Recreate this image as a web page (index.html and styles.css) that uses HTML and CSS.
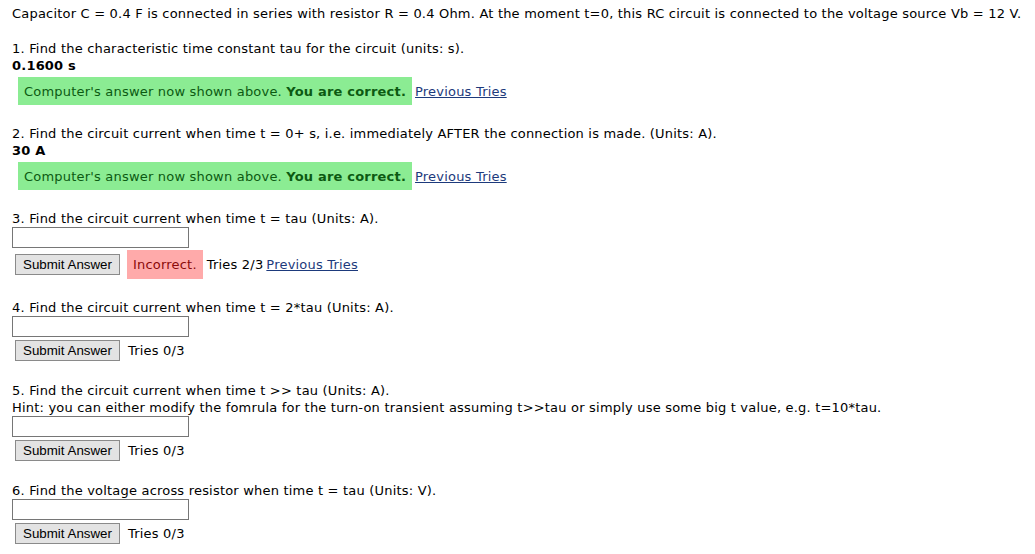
FILE: index.html
```html
<!DOCTYPE html>
<html>
<head>
<meta charset="utf-8">
<link rel="stylesheet" href="styles.css">
</head>
<body>
<div class="page">
  <div class="intro">Capacitor C = 0.4 F is connected in series with resistor R = 0.4 Ohm. At the moment t=0, this RC circuit is connected to the voltage source Vb = 12 V.</div>

  <div class="part">
    <div class="line">1. Find the characteristic time constant tau for the circuit (units: s).</div>
    <div class="line answer">0.1600 s</div>
    <div class="status">
      <span class="correct">Computer's answer now shown above. <b>You are correct.</b></span>
      <a class="tries-link" href="#">Previous Tries</a>
    </div>
  </div>

  <div class="part">
    <div class="line">2. Find the circuit current when time t = 0+ s, i.e. immediately AFTER the connection is made. (Units: A).</div>
    <div class="line answer">30 A</div>
    <div class="status">
      <span class="correct">Computer's answer now shown above. <b>You are correct.</b></span>
      <a class="tries-link" href="#">Previous Tries</a>
    </div>
  </div>

  <div class="part">
    <div class="line">3. Find the circuit current when time t = tau (Units: A).</div>
    <input class="field" type="text">
    <div class="submit-row">
      <button class="submit" type="button">Submit Answer</button>
      <span class="incorrect">Incorrect.</span>
      <span class="tries">Tries 2/3</span>
      <a class="tries-link" href="#">Previous Tries</a>
    </div>
  </div>

  <div class="part">
    <div class="line">4. Find the circuit current when time t = 2*tau (Units: A).</div>
    <input class="field" type="text">
    <div class="submit-row">
      <button class="submit" type="button">Submit Answer</button>
      <span class="tries plain">Tries 0/3</span>
    </div>
  </div>

  <div class="part">
    <div class="line">5. Find the circuit current when time t &gt;&gt; tau (Units: A).</div>
    <div class="line">Hint: you can either modify the fomrula for the turn-on transient assuming t&gt;&gt;tau or simply use some big t value, e.g. t=10*tau.</div>
    <input class="field" type="text">
    <div class="submit-row">
      <button class="submit" type="button">Submit Answer</button>
      <span class="tries plain">Tries 0/3</span>
    </div>
  </div>

  <div class="part">
    <div class="line">6. Find the voltage across resistor when time t = tau (Units: V).</div>
    <input class="field" type="text">
    <div class="submit-row">
      <button class="submit" type="button">Submit Answer</button>
      <span class="tries plain">Tries 0/3</span>
    </div>
  </div>
</div>
</body>
</html>
```

FILE: styles.css
```css
html, body {
  margin: 0;
  padding: 0;
  background: #ffffff;
}

body {
  font-family: "DejaVu Sans", Verdana, sans-serif;
  font-size: 13px;
  line-height: 17px;
  letter-spacing: 0.2px;
  color: #000000;
}

.page {
  padding: 5px 12px 0 12px;
}

.intro {
  margin-bottom: 18px;
  white-space: nowrap;
}

.part {
  margin-bottom: 20px;
}

.line {
  white-space: nowrap;
}

.answer {
  font-weight: bold;
}

.status {
  display: flex;
  align-items: center;
  margin-top: 3px;
  margin-left: 6px;
}

.correct {
  background: #8bec93;
  color: #0c5a12;
  padding: 6px 6px 5px 6px;
  line-height: 17px;
}

.correct b {
  font-weight: bold;
}

.tries-link {
  color: #1d3a7c;
  text-decoration: underline;
  margin-left: 3px;
}

.field {
  display: block;
  box-sizing: border-box;
  width: 177px;
  height: 21px;
  margin: 0;
  padding: 1px 2px;
  border: 1px solid #767676;
  background: #ffffff;
  font-family: "DejaVu Sans", Verdana, sans-serif;
  font-size: 13px;
}

.submit-row {
  display: flex;
  align-items: center;
  margin-top: 2px;
}

.submit {
  box-sizing: border-box;
  height: 21px;
  width: 105px;
  margin: 1px 7px 1px 3px;
  padding: 0 6px;
  border: 1px solid #8a8a8a;
  border-radius: 0;
  background: #e3e3e3;
  color: #000000;
  letter-spacing: 0;
  font-family: "Liberation Sans", Arial, sans-serif;
  font-size: 13.33px;
  line-height: 17px;
}

.incorrect {
  background: #ffaaaa;
  color: #8b0a0a;
  padding: 6px 6px;
  line-height: 17px;
  margin-right: 4px;
}

.tries.plain {
  margin-left: 1px;
}
```
